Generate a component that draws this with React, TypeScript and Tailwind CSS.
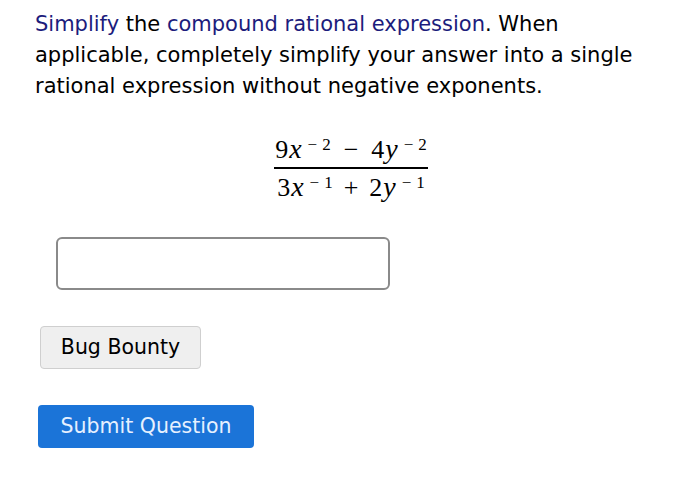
export default function App() {
  return (
    <main className="min-h-screen w-[700px] bg-white px-[35px] pt-[9px] text-black [font-family:'DejaVu_Sans',sans-serif]">
      <p className="whitespace-nowrap text-[21px] leading-[31px]">
        <span className="text-[#1c1c7c]">Simplify</span> the{" "}
        <span className="text-[#1c1c7c]">compound rational expression</span>. When
        <br />
        applicable, completely simplify your answer into a single
        <br />
        rational expression without negative exponents.
      </p>

      <div className="mt-[30px] flex justify-center pl-[2px] [font-family:'Liberation_Serif',serif] text-[26px]">
        <div className="flex flex-col items-stretch">
          <div className="flex items-baseline justify-center px-[1px] leading-[34px]">
            <span>9</span>
            <i className="ml-[1px] text-[28px]">x</i>
            <sup className="ml-[6px] text-[17px]">−</sup>
            <sup className="ml-[5px] text-[17px]">2</sup>
            <span className="ml-[13px]">−</span>
            <span className="ml-[13px]">4</span>
            <i className="ml-[1px] text-[28px]">y</i>
            <sup className="ml-[6px] text-[17px]">−</sup>
            <sup className="ml-[5px] text-[17px]">2</sup>
          </div>
          <div className="h-[2px] w-full bg-black" />
          <div className="flex items-baseline justify-center px-[1px] leading-[36px]">
            <span>3</span>
            <i className="ml-[1px] text-[28px]">x</i>
            <sup className="ml-[6px] text-[17px]">−</sup>
            <sup className="ml-[5px] text-[17px]">1</sup>
            <span className="ml-[11px]">+</span>
            <span className="ml-[11px]">2</span>
            <i className="ml-[1px] text-[28px]">y</i>
            <sup className="ml-[6px] text-[17px]">−</sup>
            <sup className="ml-[5px] text-[17px]">1</sup>
          </div>
        </div>
      </div>

      <input
        type="text"
        className="ml-[21px] mt-[31px] block h-[53px] w-[334px] rounded-[6px] border-2 border-[#8a8a8a] bg-white outline-none"
      />

      <button className="ml-[5px] mt-[36px] block h-[43px] w-[161px] rounded-[4px] border border-[#cfcfcf] bg-[#efefef] text-[20.5px] text-black">
        Bug Bounty
      </button>

      <button className="ml-[3px] mt-[36px] block h-[43px] w-[216px] rounded-[4px] bg-[#1b74d8] text-[20.5px] text-[#e6f0ff]">
        Submit Question
      </button>
    </main>
  );
}
